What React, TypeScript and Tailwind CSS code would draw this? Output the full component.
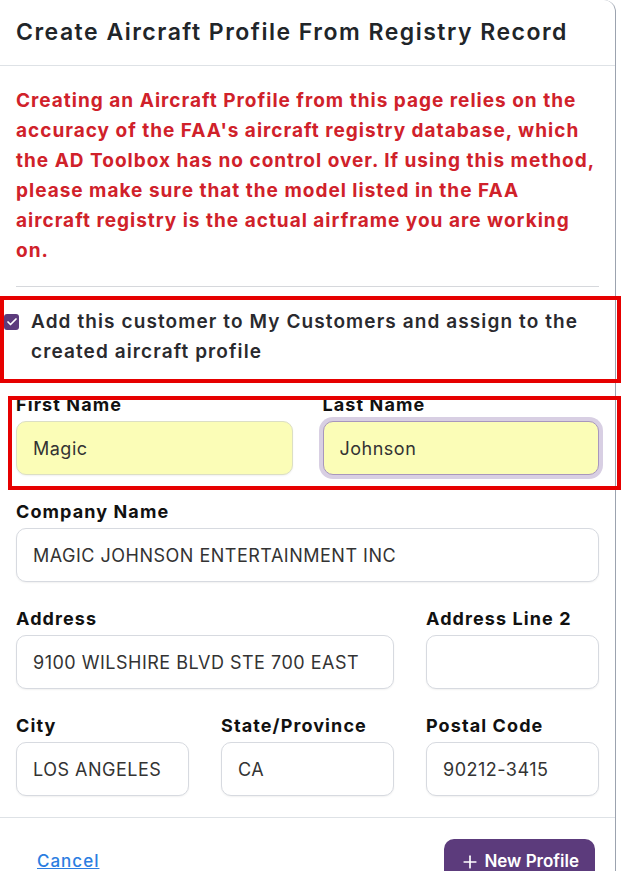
import { Plus, Check } from 'lucide-react';

const font = { fontFamily: 'Inter, "Noto Sans", sans-serif' };

const Field = ({
  label,
  value,
  tone = 'plain',
}: {
  label: string;
  value?: string;
  tone?: 'plain' | 'filled' | 'focused';
}) => {
  const box =
    tone === 'focused'
      ? 'bg-[#fbfdb7] border-[#a897bd] ring-4 ring-[#d8cfe3]'
      : tone === 'filled'
        ? 'bg-[#fbfdb7] border-[#dcdfc4]'
        : 'bg-white border-[#d7dae0]';
  return (
    <div className="flex flex-col gap-1 min-w-0">
      <label className="text-[18px] leading-6 font-bold tracking-[1.1px] text-[#111] whitespace-nowrap">{label}</label>
      <div
        className={`h-[54px] rounded-[10px] border px-4 flex items-center text-[18px] tracking-[0.5px] text-[#333] shadow-[0_1px_2px_rgba(0,0,0,0.06)] ${box}`}
      >
        <span className="truncate">{value}</span>
      </div>
    </div>
  );
};

export default function App() {
  return (
    <div className="relative min-h-screen bg-white overflow-hidden" style={font}>
      <div className="w-[616px] h-[871px] border-r border-[#9ca3af] rounded-tr-xl bg-white flex flex-col">
        {/* Header */}
        <div className="h-[66px] shrink-0 border-b border-[#dee2e6] px-4 flex items-center">
          <h1 className="text-[23px] font-semibold text-[#212529] tracking-[1.5px] whitespace-nowrap">
            Create Aircraft Profile From Registry Record
          </h1>
        </div>

        {/* Body */}
        <div className="px-4 pt-5">
          <p className="text-[19px] leading-[30px] font-bold tracking-[1px] text-[#d0212a] whitespace-nowrap">
            Creating an Aircraft Profile from this page relies on the
            <br />
            accuracy of the FAA's aircraft registry database, which
            <br />
            the AD Toolbox has no control over. If using this method,
            <br />
            please make sure that the model listed in the FAA
            <br />
            aircraft registry is the actual airframe you are working
            <br />
            on.
          </p>
          <hr className="mt-5 border-[#d6d8dc]" />

          <div className="mt-5 -ml-3 flex gap-[12px]">
            <div className="mt-[7px] w-[15px] h-[16px] shrink-0 rounded-[3px] bg-[#5c3b7c] flex items-center justify-center">
              <Check className="w-3 h-3 text-white" strokeWidth={3.5} />
            </div>
            <p className="text-[19px] leading-[30px] font-semibold tracking-[1.1px] text-[#2a2a2e] whitespace-nowrap">
              Add this customer to My Customers and assign to the
              <br />
              created aircraft profile
            </p>
          </div>

          <div className="mt-[26px] grid grid-cols-2 gap-x-[30px]">
            <Field label="First Name" value="Magic" tone="filled" />
            <Field label="Last Name" value="Johnson" tone="focused" />
          </div>

          <div className="mt-[25px]">
            <Field label="Company Name" value="MAGIC JOHNSON ENTERTAINMENT INC" />
          </div>

          <div className="mt-[25px] grid grid-cols-3 gap-x-8">
            <div className="col-span-2">
              <Field label="Address" value="9100 WILSHIRE BLVD STE 700 EAST" />
            </div>
            <Field label="Address Line 2" />
          </div>

          <div className="mt-[25px] grid grid-cols-3 gap-x-8">
            <Field label="City" value="LOS ANGELES" />
            <Field label="State/Province" value="CA" />
            <Field label="Postal Code" value="90212-3415" />
          </div>
        </div>

        {/* Footer */}
        <div className="mt-[21px] border-t border-[#dee2e6] flex justify-between items-start pt-[21px] pl-[37px] pr-5">
          <a href="#" className="mt-[10px] text-[17px] font-medium tracking-[1px] text-[#2b7de1] underline">
            Cancel
          </a>
          <button className="h-[46px] px-4 rounded-[10px] bg-[#5c3b7c] text-white text-[17px] font-semibold flex items-center gap-1">
            <Plus className="w-5 h-5" strokeWidth={2} />
            New Profile
          </button>
        </div>
      </div>

      {/* Annotation outlines */}
      <div className="absolute left-0 top-[296px] w-[621px] h-[87px] border-4 border-[#e60000] pointer-events-none" />
      <div className="absolute left-[8px] top-[396px] w-[613px] h-[94px] border-4 border-[#e60000] pointer-events-none" />
    </div>
  );
}
